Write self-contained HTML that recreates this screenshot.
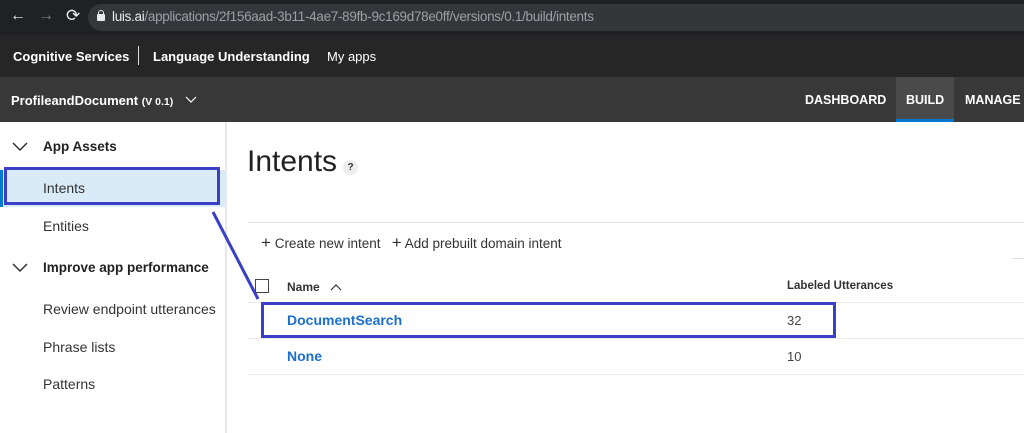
<!DOCTYPE html>
<html><head><style>
*{margin:0;padding:0;box-sizing:border-box}
body{width:1024px;height:433px;overflow:hidden;font-family:"Liberation Sans",sans-serif;background:#fff;position:relative}
.a{position:absolute;white-space:nowrap}
</style></head><body>
<div class="a" style="left:0;top:0;width:1024px;height:35px;background:#202124"></div>
<div class="a" style="left:88px;top:4px;width:960px;height:27px;border-radius:14px;background:#35363a"></div>
<div class="a" style="left:10px;top:7px;color:#e8eaed;font-size:16px">←</div>
<div class="a" style="left:38px;top:7px;color:#7a7c80;font-size:16px">→</div>
<div class="a" style="left:66px;top:6px;color:#e8eaed;font-size:17px">⟳</div>
<div class="a" style="left:97px;top:14px;width:8px;height:7px;background:#e8eaed;border-radius:1px"></div>
<div class="a" style="left:98px;top:10px;width:6px;height:6px;border:1.5px solid #e8eaed;border-bottom:none;border-radius:3px 3px 0 0"></div>
<div class="a" style="left:112px;top:9px;font-size:13.5px;color:#9aa0a6;letter-spacing:-0.3px"><span style="color:#e8eaed">luis.ai</span>/applications/2f156aad-3b11-4ae7-89fb-9c169d78e0ff/versions/0.1/build/intents</div>
<div class="a" style="left:0;top:35px;width:1024px;height:42px;background:#262626"></div>
<div class="a" style="left:13px;top:49px;color:#fff;font-size:13px;font-weight:bold">Cognitive Services</div>
<div class="a" style="left:138px;top:46px;width:1px;height:19px;background:#ddd"></div>
<div class="a" style="left:153px;top:49px;color:#fff;font-size:13px;font-weight:bold">Language Understanding</div>
<div class="a" style="left:327px;top:49px;color:#fff;font-size:13px">My apps</div>
<div class="a" style="left:0;top:77px;width:1024px;height:45px;background:#383838"></div>
<div class="a" style="left:896px;top:77px;width:58px;height:45px;background:#4a4a4a;border-bottom:3px solid #0078d4"></div>
<div class="a" style="left:11px;top:93px;color:#fff;font-size:13px;font-weight:bold">ProfileandDocument <span style="font-size:10.5px">(V 0.1)</span></div>
<svg class="a" style="left:185px;top:96px" width="12" height="8"><polyline points="1,1 6,6 11,1" fill="none" stroke="#fff" stroke-width="1.2"/></svg>
<div class="a" style="left:805px;top:93px;color:#fff;font-size:12.5px;font-weight:bold">DASHBOARD</div>
<div class="a" style="left:906px;top:93px;color:#fff;font-size:12.5px;font-weight:bold">BUILD</div>
<div class="a" style="left:965px;top:93px;color:#fff;font-size:12.5px;font-weight:bold">MANAGE</div>
<div class="a" style="left:0;top:122px;width:227px;height:311px;background:#fff;border-right:2px solid #e8e8e8"></div>
<div class="a" style="left:0;top:170px;width:225px;height:37px;background:#d9ebf7"></div>
<div class="a" style="left:0;top:170px;width:3px;height:37px;background:#0078d4"></div>
<div class="a" style="left:4px;top:167px;width:216px;height:38px;border:3px solid #3a3fc6"></div>
<svg class="a" style="left:0;top:0" width="1024" height="433"><line x1="213" y1="212" x2="258" y2="299" stroke="#3a3fc6" stroke-width="3"/>
<polyline points="13,143 20,150 27,143" fill="none" stroke="#333" stroke-width="1.5"/>
<polyline points="13,264 20,271 27,264" fill="none" stroke="#333" stroke-width="1.5"/>
<polyline points="331,290 336,285 341,290" fill="none" stroke="#333" stroke-width="1.2"/></svg>
<div class="a" style="left:43px;top:139px;color:#222;font-size:13.5px;font-weight:bold">App Assets</div>
<div class="a" style="left:43px;top:180px;color:#333;font-size:14px">Intents</div>
<div class="a" style="left:43px;top:218px;color:#333;font-size:14px">Entities</div>
<div class="a" style="left:43px;top:260px;color:#222;font-size:13.5px;font-weight:bold">Improve app performance</div>
<div class="a" style="left:43px;top:301px;color:#333;font-size:14px">Review endpoint utterances</div>
<div class="a" style="left:43px;top:339px;color:#333;font-size:14px">Phrase lists</div>
<div class="a" style="left:43px;top:376px;color:#333;font-size:14px">Patterns</div>
<div class="a" style="left:247px;top:145px;color:#222;font-size:30px;font-weight:300">Intents</div>
<div class="a" style="left:343px;top:160px;width:15px;height:15px;border-radius:8px;background:#eee;font-size:10px;font-weight:bold;text-align:center;line-height:15px;color:#333">?</div>
<div class="a" style="left:248px;top:222px;width:776px;height:1px;background:#ddd"></div>
<div class="a" style="left:261px;top:233px;color:#333;font-size:13.5px"><span style="font-size:17px;font-weight:300">+</span> Create new intent &nbsp;&nbsp;<span style="font-size:17px;font-weight:300">+</span> Add prebuilt domain intent</div>
<div class="a" style="left:1012px;top:258px;width:12px;height:1px;background:#ddd"></div>
<div class="a" style="left:255px;top:279px;width:14px;height:14px;border:1px solid #444"></div>
<div class="a" style="left:287px;top:280px;color:#333;font-size:12px;font-weight:bold">Name</div>
<div class="a" style="left:787px;top:280px;color:#333;font-size:11.5px;font-weight:bold">Labeled Utterances</div>
<div class="a" style="left:248px;top:302px;width:776px;height:1px;background:#eaeaea"></div>
<div class="a" style="left:248px;top:338px;width:776px;height:1px;background:#eaeaea"></div>
<div class="a" style="left:248px;top:374px;width:776px;height:1px;background:#eaeaea"></div>
<div class="a" style="left:261px;top:302px;width:575px;height:36px;border:3px solid #3a3fc6"></div>
<div class="a" style="left:287px;top:312px;color:#1a6fd0;font-size:14px;font-weight:bold">DocumentSearch</div>
<div class="a" style="left:787px;top:313px;color:#444;font-size:13px">32</div>
<div class="a" style="left:287px;top:348px;color:#1a6fd0;font-size:14px;font-weight:bold">None</div>
<div class="a" style="left:787px;top:349px;color:#444;font-size:13px">10</div>
</body></html>
